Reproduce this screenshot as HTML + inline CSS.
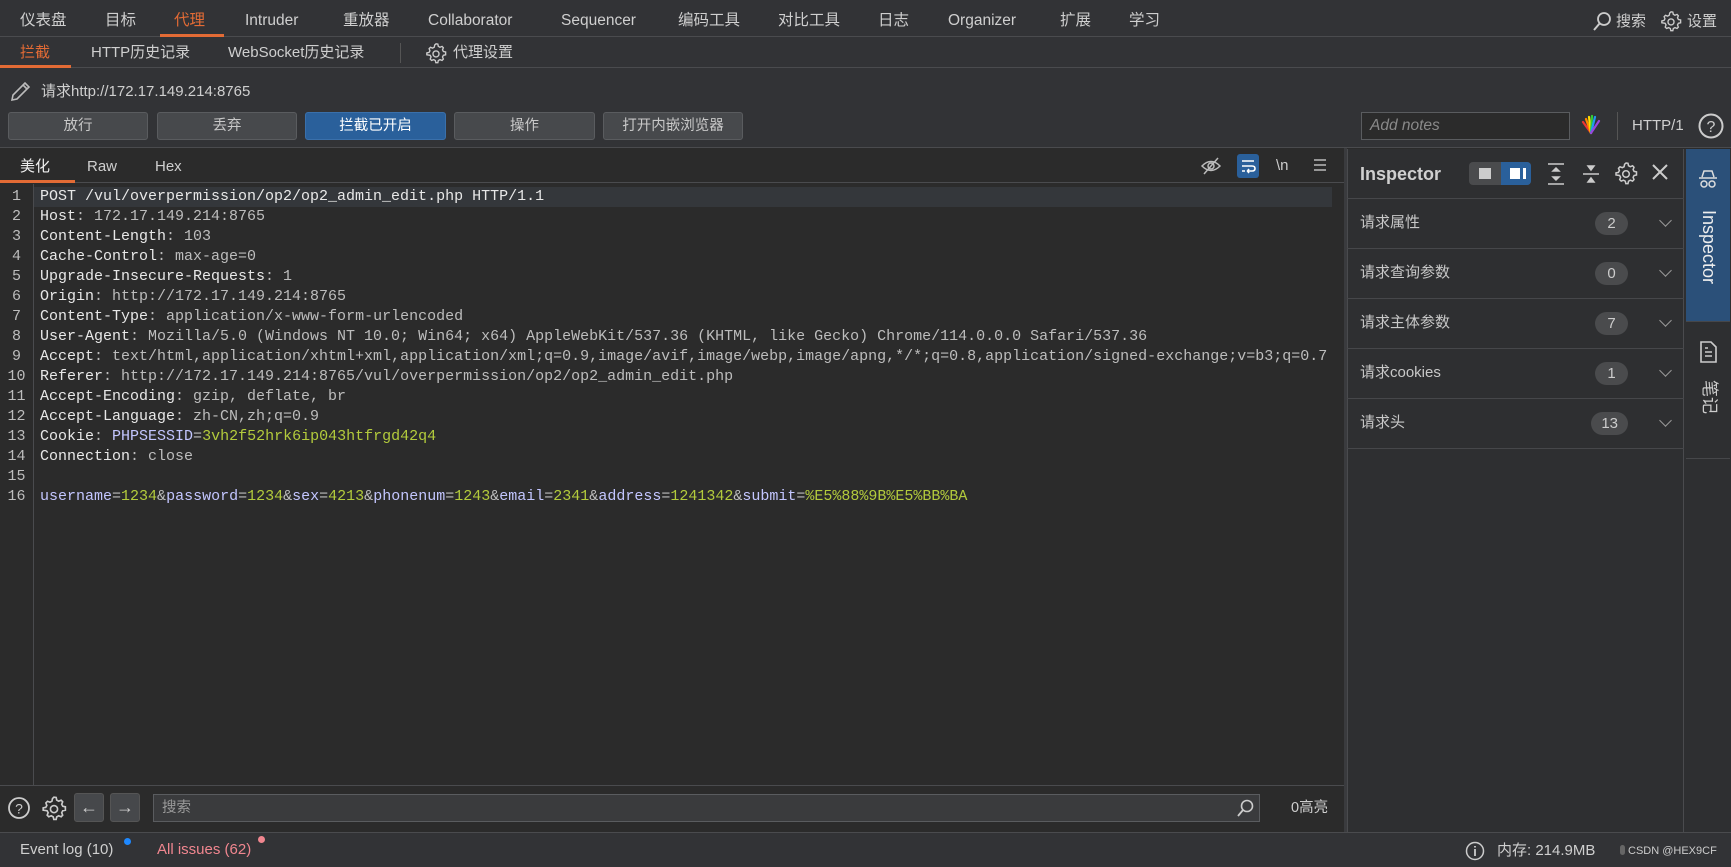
<!DOCTYPE html>
<html><head><meta charset="utf-8"><style>
*{margin:0;padding:0;box-sizing:border-box}
body{width:1731px;height:867px;background:#2b2b2b;font-family:"Liberation Sans","Noto Sans CJK SC",sans-serif;color:#cfcfcf;font-size:15px;position:relative;overflow:hidden}
.a{position:absolute;white-space:nowrap;line-height:20px}
.bar1{position:absolute;left:0;top:0;width:1731px;height:37px;background:#323336;border-bottom:1px solid #4a4b4e}
.bar2{position:absolute;left:0;top:37px;width:1731px;height:31px;background:#323336;border-bottom:1px solid #4a4b4e}
.bar3{position:absolute;left:0;top:68px;width:1731px;height:80px;background:#323336;border-bottom:1px solid #4a4b4e}
.btn{position:absolute;top:112px;height:28px;background:#47494c;border:1px solid #5a5c5f;border-radius:3px;text-align:center;line-height:26px;color:#c8c8c8;font-size:14.5px}
.code{position:absolute;left:40px;top:187px;font-family:"Liberation Mono",monospace;font-size:15px;line-height:20px;color:#bdbdbd;white-space:pre}
.k{color:#e8e8e8}.p{color:#c3c6ff}.g{color:#b3cb3c}
.ln{position:absolute;left:0;top:187px;width:33px;font-family:"Liberation Mono",monospace;font-size:15px;line-height:20px;color:#bdbdbd;text-align:center}
.row{position:absolute;left:1347px;width:337px;height:50px;border-bottom:1px solid #46474a}
.row span.l{position:absolute;left:13px;top:14px;color:#c8c8c8;line-height:20px}
.badge{position:absolute;top:13px;right:56px;height:23px;min-width:33px;padding:0 10px;border-radius:12px;background:#4a4b4d;color:#ccc;text-align:center;line-height:23px}
.chev{position:absolute;right:14px;top:17px;width:9px;height:9px;border-right:1.5px solid #999;border-bottom:1.5px solid #999;transform:rotate(45deg)}
</style></head><body>
<div class="bar1"></div><div class="bar2"></div><div class="bar3"></div>
<div class="a" style="top:11px;left:20px;font-size:15.5px;color:#cfcfcf">仪表盘</div>
<div class="a" style="top:11px;left:105px;font-size:15.5px">目标</div>
<div class="a" style="top:11px;left:174px;font-size:15.5px;color:#e36b35">代理</div>
<div class="a" style="top:34px;left:160px;width:64px;height:3px;background:#e36b35"></div>
<div class="a" style="top:11px;left:245px;font-size:15.5px">Intruder</div>
<div class="a" style="top:11px;left:343px;font-size:15.5px">重放器</div>
<div class="a" style="top:11px;left:428px;font-size:15.5px">Collaborator</div>
<div class="a" style="top:11px;left:561px;font-size:15.5px">Sequencer</div>
<div class="a" style="top:11px;left:678px;font-size:15.5px">编码工具</div>
<div class="a" style="top:11px;left:778px;font-size:15.5px">对比工具</div>
<div class="a" style="top:11px;left:878px;font-size:15.5px">日志</div>
<div class="a" style="top:11px;left:948px;font-size:15.5px">Organizer</div>
<div class="a" style="top:11px;left:1060px;font-size:15.5px">扩展</div>
<div class="a" style="top:11px;left:1129px;font-size:15.5px">学习</div>
<svg class="a" style="left:1591px;top:11px" width="22" height="22" viewBox="0 0 22 22"><circle cx="13" cy="8" r="6" fill="none" stroke="#ccc" stroke-width="1.8"/><path d="M9 12 L3 19" stroke="#ccc" stroke-width="2"/></svg>
<div class="a" style="top:12px;left:1616px;font-size:15px">搜索</div>
<svg class="a" style="left:1660px;top:10px" width="22" height="22" viewBox="0 0 24 24"><path d="M12 2l2 .3.5 2.4 1.8 1 2.3-.9 1.4 1.5-.9 2.3 1 1.8 2.4.5V14l-2.4.5-1 1.8.9 2.3-1.4 1.5-2.3-.9-1.8 1-.5 2.4h-2.2l-.5-2.4-1.8-1-2.3.9-1.5-1.5.9-2.3-1-1.8L2 14v-2.1l2.4-.5 1-1.8-.9-2.3L6 5.8l2.3.9 1.8-1 .5-2.4z" fill="none" stroke="#ccc" stroke-width="1.5"/><circle cx="12" cy="13" r="3.3" fill="none" stroke="#ccc" stroke-width="1.5"/></svg>
<div class="a" style="top:12px;left:1687px;font-size:15px">设置</div>

<div class="a" style="top:43px;left:20px;color:#e36b35">拦截</div>
<div class="a" style="top:65px;left:0;width:71px;height:3px;background:#e36b35"></div>
<div class="a" style="top:43px;left:91px">HTTP历史记录</div>
<div class="a" style="top:43px;left:228px">WebSocket历史记录</div>
<div class="a" style="top:43px;left:400px;width:1px;height:20px;background:#555"></div>
<svg class="a" style="left:425px;top:42px" width="22" height="22" viewBox="0 0 24 24"><path d="M12 2l2 .3.5 2.4 1.8 1 2.3-.9 1.4 1.5-.9 2.3 1 1.8 2.4.5V14l-2.4.5-1 1.8.9 2.3-1.4 1.5-2.3-.9-1.8 1-.5 2.4h-2.2l-.5-2.4-1.8-1-2.3.9-1.5-1.5.9-2.3-1-1.8L2 14v-2.1l2.4-.5 1-1.8-.9-2.3L6 5.8l2.3.9 1.8-1 .5-2.4z" fill="none" stroke="#ccc" stroke-width="1.5"/><circle cx="12" cy="13" r="3.3" fill="none" stroke="#ccc" stroke-width="1.5"/></svg>
<div class="a" style="top:43px;left:453px">代理设置</div>

<svg class="a" style="left:8px;top:80px" width="24" height="24" viewBox="0 0 24 24"><path d="M4 20 L5 15 L17 3 L21 7 L9 19 Z M15 5 L19 9" fill="none" stroke="#bbb" stroke-width="1.6"/></svg>
<div class="a" style="top:82px;left:41px">请求http://172.17.149.214:8765</div>
<div class="btn" style="left:8px;width:140px">放行</div>
<div class="btn" style="left:157px;width:140px">丢弃</div>
<div class="btn" style="left:305px;width:141px;background:#2a609b;border-color:#3a70ab;color:#fff">拦截已开启</div>
<div class="btn" style="left:454px;width:141px">操作</div>
<div class="btn" style="left:603px;width:140px">打开内嵌浏览器</div>
<div class="a" style="left:1361px;top:112px;width:209px;height:28px;border:1px solid #5a5c5f;background:#2b2b2b;color:#8a8a8a;font-style:italic;padding:3px 8px;font-size:15.5px">Add notes</div>
<svg class="a" style="left:1579px;top:113px" width="24" height="24" viewBox="0 0 24 24"><g stroke-width="2.2" stroke-linecap="round"><path d="M12 20 L4 9" stroke="#e33"/><path d="M12 20 L7 6" stroke="#f80"/><path d="M12 20 L10 4" stroke="#fd0"/><path d="M12 20 L13 3" stroke="#3c3"/><path d="M12 20 L16 4" stroke="#29e"/><path d="M12 20 L20 8" stroke="#94d"/></g></svg>
<div class="a" style="left:1617px;top:112px;width:1px;height:28px;background:#555"></div>
<div class="a" style="top:116px;left:1632px">HTTP/1</div>
<svg class="a" style="left:1697px;top:112px" width="28" height="28" viewBox="0 0 28 28"><circle cx="14" cy="14" r="11.5" fill="none" stroke="#ccc" stroke-width="2"/><text x="14" y="20" text-anchor="middle" font-size="16" fill="#ccc" font-family="Liberation Sans">?</text></svg>

<div class="a" style="left:0;top:149px;width:1344px;height:34px;background:#2b2b2b;border-bottom:1px solid #4a4b4e"></div>
<div class="a" style="top:157px;left:20px;color:#eee">美化</div>
<div class="a" style="top:180px;left:0;width:75px;height:3px;background:#e36b35"></div>
<div class="a" style="top:157px;left:87px">Raw</div>
<div class="a" style="top:157px;left:155px">Hex</div>
<svg class="a" style="left:1200px;top:155px" width="22" height="22" viewBox="0 0 22 22"><path d="M2 11 Q11 2 20 11 Q11 20 2 11Z" fill="none" stroke="#bbb" stroke-width="1.5"/><circle cx="11" cy="11" r="3" fill="none" stroke="#bbb" stroke-width="1.5"/><path d="M4 19 L18 3" stroke="#bbb" stroke-width="1.5"/></svg>
<div class="a" style="left:1237px;top:154px;width:22px;height:24px;background:#2a609b;border-radius:3px"></div>
<svg class="a" style="left:1239px;top:157px" width="18" height="18" viewBox="0 0 18 18"><path d="M3 4 H15 M3 9 H13 Q16 9 16 11.5 Q16 14 13 14 H9 M3 14 H6 M10 12 L8.5 14 L10 16" fill="none" stroke="#fff" stroke-width="1.6"/></svg>
<div class="a" style="top:156px;left:1276px;color:#ccc">\n</div>
<svg class="a" style="left:1312px;top:157px" width="16" height="16" viewBox="0 0 16 16"><path d="M2 3H14M2 8H14M2 13H14" stroke="#bbb" stroke-width="1.5"/></svg>
<div class="a" style="left:33px;top:184px;width:1px;height:601px;background:#4a4b4e"></div>
<div class="a" style="left:34px;top:187px;width:1298px;height:20px;background:#34373b"></div>
<div class="ln">1<br>2<br>3<br>4<br>5<br>6<br>7<br>8<br>9<br>10<br>11<br>12<br>13<br>14<br>15<br>16</div>
<div class="code"><span class="k">POST /vul/overpermission/op2/op2_admin_edit.php HTTP/1.1</span>
<span class="k">Host</span>: 172.17.149.214:8765
<span class="k">Content-Length</span>: 103
<span class="k">Cache-Control</span>: max-age=0
<span class="k">Upgrade-Insecure-Requests</span>: 1
<span class="k">Origin</span>: http://172.17.149.214:8765
<span class="k">Content-Type</span>: application/x-www-form-urlencoded
<span class="k">User-Agent</span>: Mozilla/5.0 (Windows NT 10.0; Win64; x64) AppleWebKit/537.36 (KHTML, like Gecko) Chrome/114.0.0.0 Safari/537.36
<span class="k">Accept</span>: text/html,application/xhtml+xml,application/xml;q=0.9,image/avif,image/webp,image/apng,*/*;q=0.8,application/signed-exchange;v=b3;q=0.7
<span class="k">Referer</span>: http://172.17.149.214:8765/vul/overpermission/op2/op2_admin_edit.php
<span class="k">Accept-Encoding</span>: gzip, deflate, br
<span class="k">Accept-Language</span>: zh-CN,zh;q=0.9
<span class="k">Cookie</span>: <span class="p">PHPSESSID</span>=<span class="g">3vh2f52hrk6ip043htfrgd42q4</span>
<span class="k">Connection</span>: close

<span class="p">username</span>=<span class="g">1234</span>&amp;<span class="p">password</span>=<span class="g">1234</span>&amp;<span class="p">sex</span>=<span class="g">4213</span>&amp;<span class="p">phonenum</span>=<span class="g">1243</span>&amp;<span class="p">email</span>=<span class="g">2341</span>&amp;<span class="p">address</span>=<span class="g">1241342</span>&amp;<span class="p">submit</span>=<span class="g">%E5%88%9B%E5%BB%BA</span></div>
<div class="a" style="left:1332px;top:184px;width:12px;height:601px;background:#2b2b2b"></div>

<div class="a" style="left:0;top:785px;width:1344px;height:47px;background:#2b2b2b;border-top:1px solid #4a4b4e"></div>
<svg class="a" style="left:7px;top:796px" width="24" height="24" viewBox="0 0 24 24"><circle cx="12" cy="12" r="10" fill="none" stroke="#ccc" stroke-width="1.8"/><text x="12" y="17.5" text-anchor="middle" font-size="14" fill="#ccc" font-family="Liberation Sans">?</text></svg>
<svg class="a" style="left:41px;top:795px" width="26" height="26" viewBox="0 0 24 24"><path d="M12 2l2 .3.5 2.4 1.8 1 2.3-.9 1.4 1.5-.9 2.3 1 1.8 2.4.5V14l-2.4.5-1 1.8.9 2.3-1.4 1.5-2.3-.9-1.8 1-.5 2.4h-2.2l-.5-2.4-1.8-1-2.3.9-1.5-1.5.9-2.3-1-1.8L2 14v-2.1l2.4-.5 1-1.8-.9-2.3L6 5.8l2.3.9 1.8-1 .5-2.4z" fill="none" stroke="#ccc" stroke-width="1.5"/><circle cx="12" cy="13" r="3.3" fill="none" stroke="#ccc" stroke-width="1.5"/></svg>
<div class="a" style="left:74px;top:793px;width:30px;height:29px;background:#46484b;border:1px solid #555;border-radius:3px;color:#ccc;text-align:center;line-height:26px;font-size:18px">←</div>
<div class="a" style="left:110px;top:793px;width:30px;height:29px;background:#46484b;border:1px solid #555;border-radius:3px;color:#ccc;text-align:center;line-height:26px;font-size:18px">→</div>
<div class="a" style="left:153px;top:794px;width:1107px;height:28px;background:#3a3b3d;border:1px solid #5a5c5f;color:#999;padding:3px 8px;font-size:14.5px">搜索</div>
<svg class="a" style="left:1235px;top:798px" width="20" height="20" viewBox="0 0 20 20"><circle cx="12" cy="8" r="5.5" fill="none" stroke="#ccc" stroke-width="1.6"/><path d="M8 12 L3 18" stroke="#ccc" stroke-width="1.8"/></svg>
<div class="a" style="top:798px;left:1291px;font-size:14.5px">0高亮</div>

<div class="a" style="left:1344px;top:148px;width:3px;height:684px;background:#3a3b3e"></div>
<div class="a" style="left:1347px;top:149px;width:337px;height:683px;background:#2e2f31;border-left:1px solid #4a4b4e;border-right:1px solid #4a4b4e"></div>
<div class="a" style="left:1347px;top:149px;width:337px;height:50px;border-bottom:1px solid #46474a"></div>
<div class="a" style="top:164px;left:1360px;font-weight:bold;font-size:18px;color:#d0d0d0">Inspector</div>
<div class="a" style="left:1469px;top:162px;width:62px;height:23px;background:#4a4b4d;border-radius:4px"></div>
<div class="a" style="left:1501px;top:162px;width:30px;height:23px;background:#2a609b;border-radius:0 4px 4px 0"></div>
<div class="a" style="left:1479px;top:168px;width:12px;height:11px;background:#ccc"></div>
<div class="a" style="left:1510px;top:168px;width:13px;height:11px;background:#fff;border-right:3px solid #2a609b;box-shadow:3px 0 0 #fff"></div>
<svg class="a" style="left:1546px;top:162px" width="20" height="24" viewBox="0 0 20 24"><path d="M2 2H18M2 22H18M10 6 L7 9H13Z M10 18 L7 15H13Z" stroke="#ccc" fill="#ccc" stroke-width="1.5"/></svg>
<svg class="a" style="left:1581px;top:162px" width="20" height="24" viewBox="0 0 20 24"><path d="M2 12H18M10 8 L7 4H13Z M10 16 L7 20H13Z" stroke="#ccc" fill="#ccc" stroke-width="1.5"/></svg>
<svg class="a" style="left:1614px;top:161px" width="24" height="24" viewBox="0 0 24 24"><path d="M12 2l2 .3.5 2.4 1.8 1 2.3-.9 1.4 1.5-.9 2.3 1 1.8 2.4.5V14l-2.4.5-1 1.8.9 2.3-1.4 1.5-2.3-.9-1.8 1-.5 2.4h-2.2l-.5-2.4-1.8-1-2.3.9-1.5-1.5.9-2.3-1-1.8L2 14v-2.1l2.4-.5 1-1.8-.9-2.3L6 5.8l2.3.9 1.8-1 .5-2.4z" fill="none" stroke="#ccc" stroke-width="1.5"/><circle cx="12" cy="13" r="3.3" fill="none" stroke="#ccc" stroke-width="1.5"/></svg>
<svg class="a" style="left:1651px;top:163px" width="18" height="18" viewBox="0 0 18 18"><path d="M2 2L16 16M16 2L2 16" stroke="#ccc" stroke-width="2"/></svg>
<div class="row" style="top:199px"><span class="l">请求属性</span><span class="badge">2</span><span class="chev"></span></div>
<div class="row" style="top:249px"><span class="l">请求查询参数</span><span class="badge">0</span><span class="chev"></span></div>
<div class="row" style="top:299px"><span class="l">请求主体参数</span><span class="badge">7</span><span class="chev"></span></div>
<div class="row" style="top:349px"><span class="l">请求cookies</span><span class="badge">1</span><span class="chev"></span></div>
<div class="row" style="top:399px"><span class="l">请求头</span><span class="badge">13</span><span class="chev"></span></div>

<div class="a" style="left:1684px;top:149px;width:47px;height:683px;background:#2e2f31"></div>
<div class="a" style="left:1686px;top:149px;width:44px;height:172px;background:#2b5079"></div>
<svg class="a" style="left:1697px;top:168px" width="22" height="22" viewBox="0 0 22 22"><path d="M5 9 L7 3 H15 L17 9 M2 10H20" fill="none" stroke="#ddd" stroke-width="1.5"/><circle cx="7" cy="16" r="3" fill="none" stroke="#ddd" stroke-width="1.5"/><circle cx="15" cy="16" r="3" fill="none" stroke="#ddd" stroke-width="1.5"/></svg>
<div class="a" style="left:1697px;top:210px;transform-origin:0 0;transform:translate(22px,0) rotate(90deg);font-size:18px;color:#eee">Inspector</div>
<div class="a" style="left:1686px;top:321px;width:44px;height:1px;background:#46474a"></div>
<svg class="a" style="left:1697px;top:340px" width="22" height="24" viewBox="0 0 22 24"><path d="M4 2H14L19 7V22H4Z M8 12H15M8 16H15M8 8H11" fill="none" stroke="#ccc" stroke-width="1.6"/></svg>
<div class="a" style="left:1697px;top:380px;transform-origin:0 0;transform:translate(22px,0) rotate(90deg);font-size:17px;color:#ccc">笔记</div>
<div class="a" style="left:1686px;top:458px;width:44px;height:1px;background:#46474a"></div>

<div class="a" style="left:0;top:832px;width:1731px;height:35px;background:#323336;border-top:1px solid #4a4b4e"></div>
<div class="a" style="top:840px;left:20px">Event log (10)</div>
<div class="a" style="top:838px;left:124px;width:7px;height:7px;border-radius:50%;background:#1e88ff"></div>
<div class="a" style="top:840px;left:157px;color:#f0868f">All issues (62)</div>
<div class="a" style="top:836px;left:258px;width:7px;height:7px;border-radius:50%;background:#f0868f"></div>
<svg class="a" style="left:1465px;top:841px" width="20" height="20" viewBox="0 0 20 20"><circle cx="10" cy="10" r="8.5" fill="none" stroke="#ccc" stroke-width="1.5"/><path d="M10 8V15M10 5V6.5" stroke="#ccc" stroke-width="1.8"/></svg>
<div class="a" style="top:841px;left:1497px">内存: 214.9MB</div>
<div class="a" style="top:845px;left:1620px;width:5px;height:10px;background:#666;border-radius:3px"></div>
<div class="a" style="top:841px;left:1628px;font-size:11px;color:#ccc">CSDN @HEX9CF</div>
</body></html>
